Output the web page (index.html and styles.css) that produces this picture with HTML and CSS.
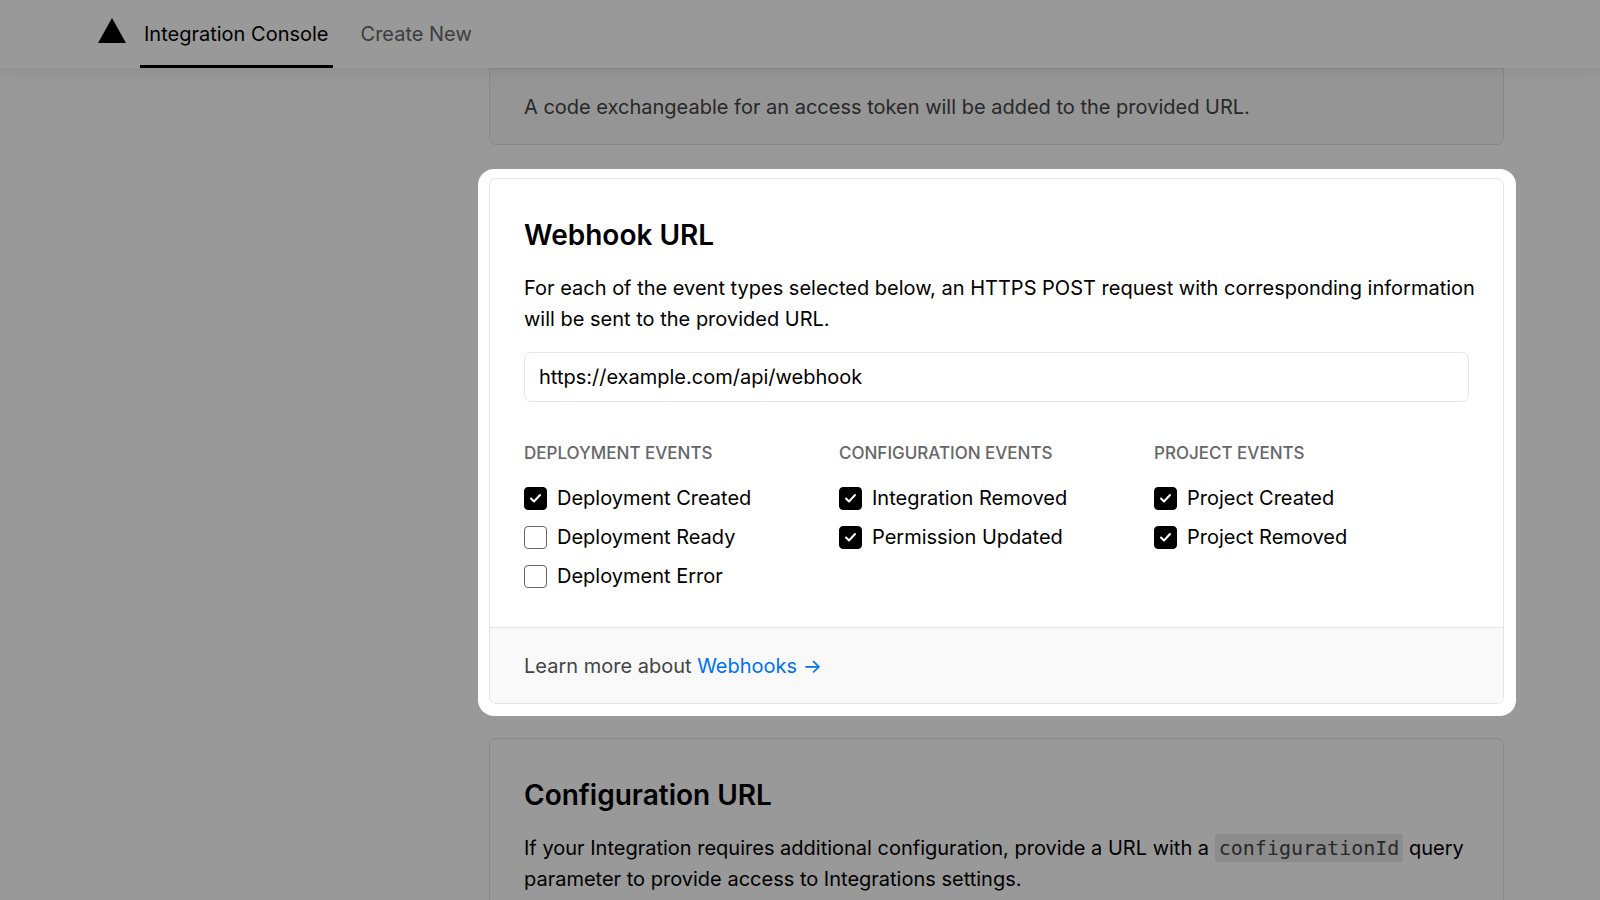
FILE: index.html
```
<!DOCTYPE html>
<html lang="en">
<head>
    <meta charset="UTF-8">
    <meta name="viewport" content="width=device-width, initial-scale=1.0">
    <title>Integration Console</title>
    <link rel="stylesheet" href="styles.css">
</head>
<body>
    <header class="header">
        <a class="logo" href="#" aria-label="Home">
            <svg width="28" height="25" viewBox="0 0 28 25"><path d="M14 0l14 25H0z"/></svg>
        </a>
        <nav class="tabs">
            <a class="tab active" href="#">Integration Console</a>
            <a class="tab" href="#">Create New</a>
        </nav>
    </header>

    <main class="content">
        <section class="card card-continued">
            <footer class="card-footer">A code exchangeable for an access token will be added to the provided URL.</footer>
        </section>

        <div class="spotlight">
            <section class="card">
                <div class="card-body">
                    <h2><label for="webhook-url">Webhook URL</label></h2>
                    <p>For each of the event types selected below, an HTTPS POST request with corresponding information will be sent to the provided URL.</p>
                    <input class="text-input" id="webhook-url" type="text" value="https://example.com/api/webhook">
                    <div class="events">
                        <div class="event-group">
                            <h3>Deployment Events</h3>
                            <label class="check"><input type="checkbox" checked>Deployment Created</label>
                            <label class="check"><input type="checkbox">Deployment Ready</label>
                            <label class="check"><input type="checkbox">Deployment Error</label>
                        </div>
                        <div class="event-group">
                            <h3>Configuration Events</h3>
                            <label class="check"><input type="checkbox" checked>Integration Removed</label>
                            <label class="check"><input type="checkbox" checked>Permission Updated</label>
                        </div>
                        <div class="event-group">
                            <h3>Project Events</h3>
                            <label class="check"><input type="checkbox" checked>Project Created</label>
                            <label class="check"><input type="checkbox" checked>Project Removed</label>
                        </div>
                    </div>
                </div>
                <footer class="card-footer">Learn more about <a href="#">Webhooks →</a></footer>
            </section>
        </div>

        <section class="card">
            <div class="card-body">
                <h2>Configuration URL</h2>
                <p>If your Integration requires additional configuration, provide a URL with a <code>configurationId</code> query parameter to provide access to Integrations settings.</p>
            </div>
        </section>
    </main>
</body>
</html>
```

FILE: styles.css
```
* {
    box-sizing: border-box;
}

body {
    margin: 0;
    height: 100vh;
    overflow: hidden; /* page is locked while the spotlight is open */
    background: #fff;
    color: #000;
    font-family: Inter, "Liberation Sans", sans-serif;
    font-size: 20px;
    line-height: 31px;
}

a {
    color: #0070f3;
    text-decoration: none;
}

/* Header */
.header {
    position: relative;
    z-index: 1;
    display: flex;
    height: 68px;
    padding: 0 98px;
    background: #fff;
    box-shadow: 0 0 20px rgba(0, 0, 0, 0.1);
}

.logo {
    display: flex;
    align-items: center;
    padding-bottom: 7px;
}

.tabs {
    display: flex;
    gap: 24px;
    margin-left: 14px;
}

.tab {
    display: flex;
    align-items: center;
    padding: 3px 4px 0;
    border-bottom: 3px solid transparent;
    color: #666;
}

.tab.active {
    border-bottom-color: #000;
    color: #000;
}

/* Cards */
.content {
    margin-left: 489px;
    margin-right: 96px;
}

.card {
    margin-bottom: 34px;
    border: 1px solid #e5e5e5;
    border-radius: 7px;
    background: #fff;
}

.card-continued {
    margin-bottom: 24px;
    border-radius: 0 0 7px 7px;
    border-top: 0;
}

.card-body {
    padding: 34px 34px 35px;
}

.card-body h2 {
    margin: 0 0 16px;
    font-size: 28px;
    font-weight: 600;
    line-height: 44px;
}

.card-body p {
    margin: 0 -8px 0 0;
}

.card-footer {
    padding: 23px 34px 21px;
    border-top: 1px solid #e5e5e5;
    border-radius: 0 0 6px 6px;
    background: #f9f9f9;
    color: #444;
}

code {
    padding: 2px 4px;
    border-radius: 3px;
    background: #eaeaea;
    color: #444;
    font-family: "DejaVu Sans Mono", monospace;
    font-size: 20px;
}

/* Lit area, the shadow dims everything else */
.spotlight {
    position: relative;
    z-index: 2;
    margin: 0 -12px 22px -11px;
    padding: 9px 12px 12px 11px;
    border-radius: 16px;
    background: #fff;
    box-shadow: 0 0 0 200vmax rgba(0, 0, 0, 0.4);
}

.spotlight .card {
    margin-bottom: 0;
}

/* Form */
.text-input {
    display: block;
    width: 100%;
    height: 50px;
    margin-top: 17px;
    padding: 0 14px;
    border: 1px solid #e5e5e5;
    border-radius: 7px;
    background: #fff;
    color: #000;
    font: inherit;
}

.events {
    display: grid;
    grid-template-columns: repeat(3, 1fr);
    margin-top: 36px;
}

.event-group h3 {
    margin: 0 0 14px;
    color: #666;
    font-size: 17px;
    font-weight: 500;
    line-height: 31px;
    text-transform: uppercase;
}

.check {
    display: flex;
    align-items: center;
    gap: 10px;
}

.check + .check {
    margin-top: 8px;
}

.check input {
    appearance: none;
    width: 23px;
    height: 23px;
    margin: 0;
    border: 1px solid #666;
    border-radius: 4px;
    background: #fff;
}

.check input:checked {
    border-color: #000;
    background: #000 url("data:image/svg+xml,%3Csvg xmlns='http://www.w3.org/2000/svg' viewBox='0 0 23 23'%3E%3Cpath d='M7 11.5l3 3L16 8' fill='none' stroke='white' stroke-width='2' stroke-linecap='round' stroke-linejoin='round'/%3E%3C/svg%3E") center / 23px 23px;
}
```
